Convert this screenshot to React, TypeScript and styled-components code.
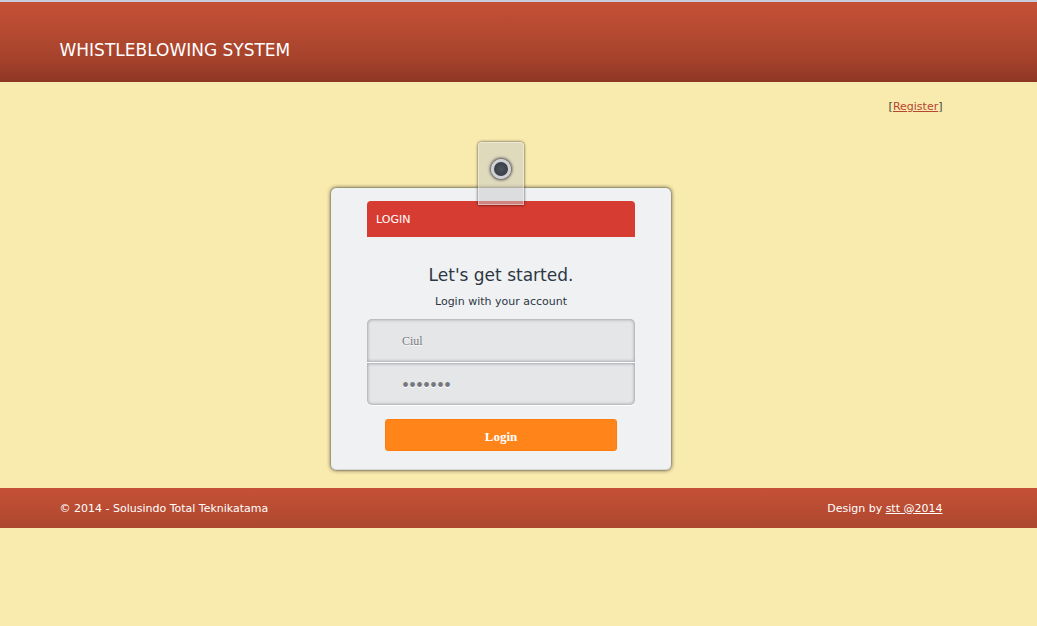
import React from 'react';
import styled, { createGlobalStyle, css } from 'styled-components';

const GlobalStyle = createGlobalStyle`
  * { box-sizing: border-box; }
  body {
    margin: 0;
    background: #f9eaae;
    color: #444;
    font: 11px/20px Verdana, "DejaVu Sans", sans-serif;
  }
`;

const Container = styled.div`
  width: 100%;
  max-width: 960px;
  margin: 0 auto;
  padding: 0 56px 0 21px;
`;

const Header = styled.header`
  border-top: 2px solid #c9ccda;
  background: linear-gradient(#c55136, #af472f 50%, #a5422c 72%, #8e3622);
  background-clip: padding-box;
`;

const HeaderInner = styled(Container)`
  display: flex;
  align-items: flex-end;
  height: 80px;
  padding-bottom: 20px;
`;

const Title = styled.h1`
  margin: 0;
  color: #fff;
  font-size: 17px;
  line-height: 24px;
  font-weight: 400;
`;

const AccountLinks = styled.nav`
  padding-top: 15px;
  text-align: right;
`;

const TextLink = styled.a<{ $light?: boolean }>`
  color: ${({ $light }) => ($light ? '#fff' : '#b5472f')};
  text-decoration: underline;
`;

const Card = styled.section`
  position: relative;
  width: 340px;
  margin: 71px auto 18px;
  padding: 13px 36px 19px;
  border-radius: 5px;
  background: #f0f1f3;
  box-shadow: 0 0 4px rgba(0, 0, 0, 0.75), 0 0 1px rgba(0, 0, 0, 0.6), inset 0 -1px 0 #d5d6d8;
`;

const Clip = styled.div`
  position: absolute;
  top: -46px;
  left: 50%;
  width: 46px;
  height: 63px;
  margin-left: -23px;
  border: 1px solid rgba(255, 255, 255, 0.4);
  border-radius: 4px 4px 0 0;
  background: rgba(200, 201, 204, 0.5);
  box-shadow: 0 0 3px rgba(0, 0, 0, 0.75);
`;

const Rivet = styled.span`
  position: absolute;
  top: 16px;
  left: 12px;
  width: 20px;
  height: 20px;
  border: 3px solid #d0d1d4;
  border-radius: 50%;
  background: radial-gradient(#4e545d, #30353d);
  box-shadow: 0 0 3px 1px rgba(30, 32, 48, 0.8);
`;

const CardBar = styled.div`
  height: 36px;
  padding: 1px 9px 0;
  border-radius: 4px 4px 0 0;
  background: #d73c32;
  color: #fff;
  line-height: 36px;
`;

const Heading = styled.h2`
  margin: 26px 0 0;
  color: #2d3744;
  font-size: 17px;
  line-height: 24px;
  font-weight: 400;
  text-align: center;
`;

const Hint = styled.p`
  margin: 5px 0 7px;
  color: #2d3744;
  text-align: center;
`;

const Field = styled.input<{ $last?: boolean }>`
  display: block;
  width: 100%;
  height: 43px;
  padding: 2px 35px 0;
  border: 0;
  border-radius: 5px 5px 0 0;
  outline: 0;
  background: #e5e6e7;
  box-shadow: inset 0 0 3px 1px #a6a8ad, 0 1px 0 #fff;
  color: #77777f;
  font: 12px "Liberation Serif", "Times New Roman", serif;
  text-shadow: 0 1px 0 #fff;
  clip-path: inset(0 0 -1px 0);

  ${({ $last }) => $last && css`
    height: 42px;
    margin-top: 1px;
    border-radius: 0 0 5px 5px;
    font-size: 20px;
  `}
`;

const LoginButton = styled.button`
  display: block;
  width: calc(100% - 36px);
  height: 32px;
  margin: 14px auto 0;
  padding: 3px 0 0;
  border: 1px solid #ff7c0c;
  border-radius: 3px;
  background: #ff851b;
  color: #fff;
  font: bold 13px "Liberation Serif", "Times New Roman", serif;
  cursor: pointer;
`;

const Footer = styled.footer`
  background: linear-gradient(#c55136, #ad472f);
  color: #fff;
`;

const FooterInner = styled(Container)`
  display: flex;
  align-items: center;
  justify-content: space-between;
  height: 40px;
  padding-top: 1px;
`;

export default function App() {
  return (
    <>
      <GlobalStyle />
      <Header>
        <HeaderInner>
          <Title>WHISTLEBLOWING SYSTEM</Title>
        </HeaderInner>
      </Header>
      <Container as="main">
        <AccountLinks>
          [<TextLink href="#register">Register</TextLink>]
        </AccountLinks>
        <Card>
          <CardBar>LOGIN</CardBar>
          <Heading>Let's get started.</Heading>
          <Hint>Login with your account</Hint>
          <form onSubmit={(event) => event.preventDefault()}>
            <Field type="text" aria-label="Username" defaultValue="Ciul" />
            <Field $last type="password" aria-label="Password" defaultValue="1234567" />
            <LoginButton type="submit">Login</LoginButton>
          </form>
          <Clip>
            <Rivet />
          </Clip>
        </Card>
      </Container>
      <Footer>
        <FooterInner>
          <span>© 2014 - Solusindo Total Teknikatama</span>
          <span>
            Design by <TextLink $light href="#designer">stt @2014</TextLink>
          </span>
        </FooterInner>
      </Footer>
    </>
  );
}
